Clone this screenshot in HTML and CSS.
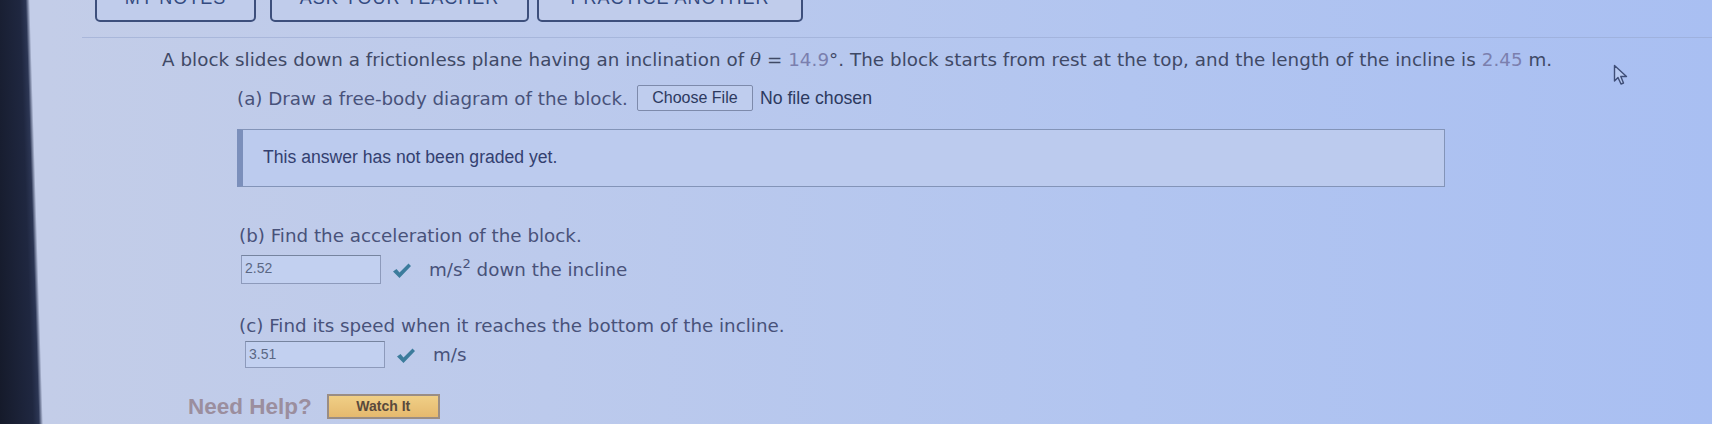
FILE: index.html
```html
<!DOCTYPE html>
<html>
<head>
<meta charset="utf-8">
<link rel="stylesheet" href="styles.css">
</head>
<body>
<div class="screen">
  <div class="bezel"></div>
  <div class="page">
    <div class="toolbar">
      <div class="tbtn b1">MY NOTES</div>
      <div class="tbtn b2">ASK YOUR TEACHER</div>
      <div class="tbtn b3">PRACTICE ANOTHER</div>
    </div>
    <div class="question">
      <p class="stem">A block slides down a frictionless plane having an inclination of <i>θ</i> = <span class="num">14.9</span>°. The block starts from rest at the top, and the length of the incline is <span class="num">2.45</span> m.</p>
      <div class="parts">
        <div class="part-a">
          <span>(a) Draw a free-body diagram of the block.</span>
          <span class="file-btn">Choose File</span>
          <span class="file-none">No file chosen</span>
        </div>
        <div class="graded">This answer has not been graded yet.</div>
        <div class="part-label pb">(b) Find the acceleration of the block.</div>
        <div class="answer-row rb">
          <span class="input">2.52</span>
          <svg class="check" viewBox="0 0 20 16" width="20" height="16"><path d="M1 8.5 L4.5 6 L7.5 9.5 L16.5 0.5 L19 3 L7.5 15 Z" fill="#3c7c9c"/></svg>
          <span class="unit">m/s<sup>2</sup> down the incline</span>
        </div>
        <div class="part-label pc">(c) Find its speed when it reaches the bottom of the incline.</div>
        <div class="answer-row rc">
          <span class="input">3.51</span>
          <svg class="check" viewBox="0 0 20 16" width="20" height="16"><path d="M1 8.5 L4.5 6 L7.5 9.5 L16.5 0.5 L19 3 L7.5 15 Z" fill="#3c7c9c"/></svg>
          <span class="unit">m/s</span>
        </div>
      </div>
      <div class="help">
        <span class="need">Need Help?</span>
        <span class="watch">Watch It</span>
      </div>
    </div>
    <svg class="cursor" viewBox="0 0 16 22" width="16" height="22"><path d="M1.5 1.5 L1.5 17 L5 13.5 L8 20 L10.5 19 L7.8 12.5 L13.5 12.5 Z" fill="#b9cbf2" stroke="#3f4e78" stroke-width="1.4" stroke-linejoin="round"/></svg>
  </div>
</div>
</body>
</html>
```
FILE: styles.css
```css
html, body {
  margin: 0;
  padding: 0;
}
body {
  width: 1712px;
  height: 424px;
  overflow: hidden;
  background: #b6c7ee;
}
.screen {
  display: flex;
  height: 424px;
}
.bezel {
  width: 48px;
  flex: none;
  background: linear-gradient(88.2deg, #151a2a 0, #1f2740 33px, #2c3654 39px, #c3cde8 43px, #c3cde8 100%);
}
.page {
  position: relative;
  flex: 1;
  background: linear-gradient(to right, #c3cde8 0%, #bccaec 30%, #b2c5f0 65%, #a9bff2 100%);
  font-family: "DejaVu Sans", Verdana, sans-serif;
  color: #3e4864;
}
.toolbar {
  display: flex;
  gap: 14px;
  padding-left: 47px;
  margin-top: -20px;
  height: 42px;
}
.tbtn {
  box-sizing: border-box;
  height: 42px;
  border: 2px solid #3d4f7c;
  border-radius: 5px;
  background: #c0cceb;
  color: #334a80;
  font-family: "Liberation Sans", Arial, sans-serif;
  font-size: 18px;
  line-height: 33px;
  text-align: center;
  letter-spacing: 1px;
}
.b1 { width: 161px; }
.b2 { width: 259px; }
.b3 { width: 266px; margin-left: -6px; }
.question {
  margin-left: 34px;
  margin-top: 15px;
  border-top: 1px solid rgba(150, 165, 205, 0.55);
  padding-left: 80px;
  padding-top: 10px;
}
.stem {
  margin: 0;
  font-size: 18.3px;
  line-height: 24px;
  letter-spacing: 0.05px;
  color: #3f4966;
}
.stem i {
  font-family: "DejaVu Serif", serif;
}
.num {
  color: #7b7fae;
}
.parts {
  padding-left: 75px;
}
.part-a {
  display: flex;
  align-items: center;
  margin-top: 13px;
  height: 26px;
  font-size: 18.3px;
  color: #48527a;
}
.file-btn {
  margin-left: 9px;
  box-sizing: border-box;
  height: 26px;
  width: 116px;
  border: 1px solid #7d8aab;
  border-radius: 2px;
  background: #bfcdee;
  font-family: "Liberation Sans", Arial, sans-serif;
  font-size: 16px;
  line-height: 24px;
  text-align: center;
  color: #2d3a60;
}
.file-none {
  margin-left: 7px;
  font-family: "Liberation Sans", Arial, sans-serif;
  font-size: 17.7px;
  color: #2d3a60;
}
.graded {
  box-sizing: border-box;
  margin-top: 18px;
  width: 1208px;
  height: 58px;
  border: 1px solid #8394b8;
  border-left: 6px solid #7b8fbb;
  background: #bccbee;
  padding-left: 20px;
  font-family: "Liberation Sans", Arial, sans-serif;
  font-size: 17.6px;
  line-height: 54px;
  color: #334070;
}
.part-label {
  font-size: 18.3px;
  line-height: 22px;
  color: #48527a;
  padding-left: 2px;
}
.pb {
  margin-top: 38px;
}
.pc {
  margin-top: 31px;
}
.answer-row {
  display: flex;
  align-items: center;
  padding-left: 4px;
}
.rb {
  margin-top: 8px;
}
.rb .input {
  height: 29px;
}
.rc {
  margin-top: 4px;
  padding-left: 8px;
}
.input {
  box-sizing: border-box;
  width: 140px;
  height: 27px;
  border: 1px solid #8d9abb;
  border-top-color: #76849f;
  background: #c2d0f0;
  font-family: "Liberation Sans", Arial, sans-serif;
  font-size: 14px;
  line-height: 25px;
  padding-left: 3px;
  color: #5a6784;
}
.check {
  margin-left: 11px;
  margin-top: 2px;
}
.unit {
  margin-left: 17px;
  font-size: 18.3px;
  color: #48527a;
}
.unit sup {
  font-size: 13px;
  vertical-align: 8px;
  line-height: 0;
}
.help {
  display: flex;
  align-items: center;
  height: 25px;
  margin-top: 26px;
  padding-left: 26px;
}
.need {
  font-family: "Liberation Sans", Arial, sans-serif;
  font-weight: bold;
  font-size: 22.5px;
  color: #9b8e9e;
}
.watch {
  margin-left: 15px;
  box-sizing: border-box;
  width: 113px;
  height: 25px;
  border: 2px solid #9a8d84;
  background: linear-gradient(#f0cf86, #e5b96e);
  font-family: "Liberation Sans", Arial, sans-serif;
  font-weight: bold;
  font-size: 14px;
  line-height: 21px;
  text-align: center;
  color: #5a4a3c;
}
.cursor {
  position: absolute;
  left: 1565px;
  top: 64px;
}
```
